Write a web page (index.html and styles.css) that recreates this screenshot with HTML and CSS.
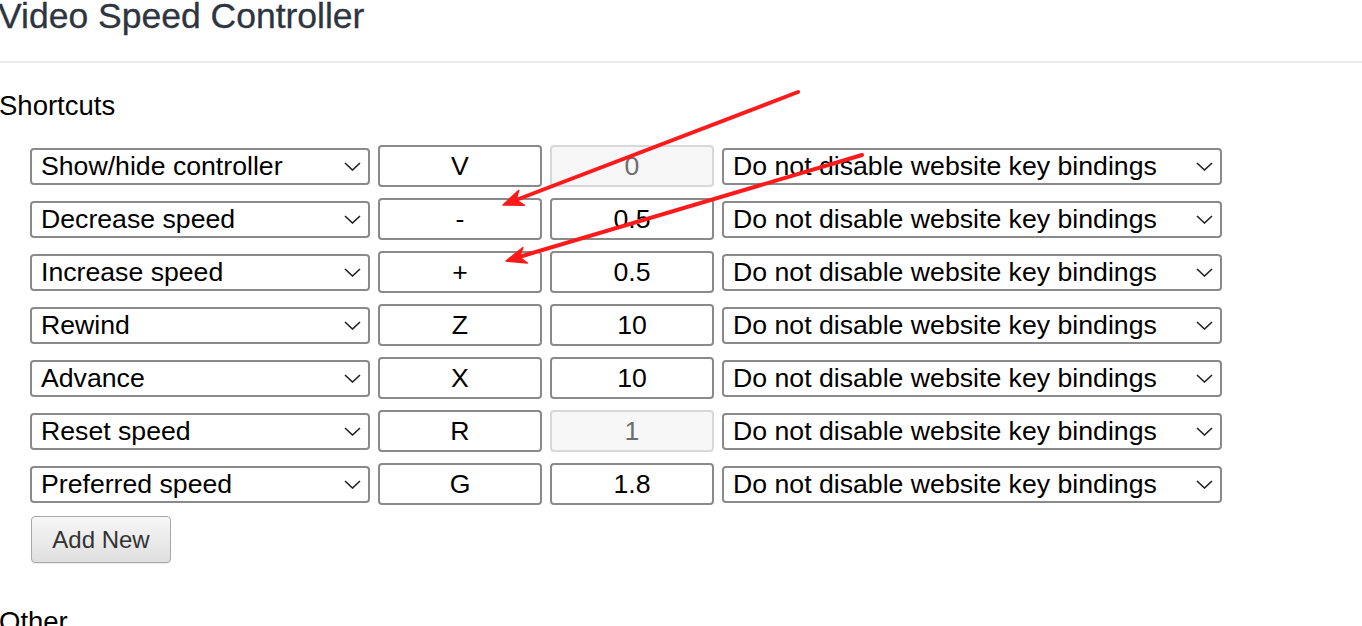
FILE: index.html
```html
<!DOCTYPE html>
<html lang="en">
<head>
    <meta charset="UTF-8">
    <meta name="viewport" content="width=device-width, initial-scale=1.0">
    <title>Video Speed Controller: Options</title>
    <link rel="stylesheet" href="styles.css">
</head>
<body>

    <div class="page">
        <h1>Video Speed Controller</h1>

        <h2>Shortcuts</h2>
        <div class="shortcuts">
            <div class="row">
                <select class="action"><option>Show/hide controller</option></select>
                <input class="key" type="text" value="V">
                <input class="amount" type="text" value="0" disabled>
                <select class="blacklist"><option>Do not disable website key bindings</option></select>
            </div>
            <div class="row">
                <select class="action"><option>Decrease speed</option></select>
                <input class="key" type="text" value="-">
                <input class="amount" type="text" value="0.5">
                <select class="blacklist"><option>Do not disable website key bindings</option></select>
            </div>
            <div class="row">
                <select class="action"><option>Increase speed</option></select>
                <input class="key" type="text" value="+">
                <input class="amount" type="text" value="0.5">
                <select class="blacklist"><option>Do not disable website key bindings</option></select>
            </div>
            <div class="row">
                <select class="action"><option>Rewind</option></select>
                <input class="key" type="text" value="Z">
                <input class="amount" type="text" value="10">
                <select class="blacklist"><option>Do not disable website key bindings</option></select>
            </div>
            <div class="row">
                <select class="action"><option>Advance</option></select>
                <input class="key" type="text" value="X">
                <input class="amount" type="text" value="10">
                <select class="blacklist"><option>Do not disable website key bindings</option></select>
            </div>
            <div class="row">
                <select class="action"><option>Reset speed</option></select>
                <input class="key" type="text" value="R">
                <input class="amount" type="text" value="1" disabled>
                <select class="blacklist"><option>Do not disable website key bindings</option></select>
            </div>
            <div class="row">
                <select class="action"><option>Preferred speed</option></select>
                <input class="key" type="text" value="G">
                <input class="amount" type="text" value="1.8">
                <select class="blacklist"><option>Do not disable website key bindings</option></select>
            </div>
            <button class="add">Add New</button>
        </div>

        <h2 class="other">Other</h2>
    </div>

    <!-- annotation arrows drawn over the screenshot -->
    <svg class="marks" width="1362" height="626" viewBox="0 0 1362 626">
        <line x1="798" y1="92" x2="516" y2="200" />
        <polygon points="503,205 524.5,205.3 516,200 518.8,190.4" />
        <line x1="862" y1="155" x2="519" y2="257" />
        <polygon points="506,261 527.4,263 519.4,257 522.9,247.6" />
    </svg>

</body>
</html>
```

FILE: styles.css
```css
body {
    font-family: "Liberation Sans", Arial, sans-serif;
    background-color: #fff;
    color: #000;
    margin: 0;
    padding: 0;
    overflow: hidden;
}

.page {
    position: relative;
}

h1 {
    font-size: 35.5px;
    font-weight: normal;
    line-height: 35px;
    color: #2d3540;
    margin: -1px 0 0 -2px;
    padding-bottom: 27px;
    border-bottom: 2px solid #ececec;
    -webkit-text-stroke: 0.3px #2d3540;
}

h2 {
    font-size: 27.5px;
    font-weight: normal;
    line-height: 30px;
    margin: 28px 0 24px -1px;
}

h2.other {
    margin-top: 44px;
}

.shortcuts {
    margin-left: 30px;
    display: flex;
    flex-direction: column;
    align-items: flex-start;
    gap: 11px;
}

.row {
    display: flex;
    align-items: center;
    gap: 8px;
    height: 42px;
}

select,
input {
    font-family: "Liberation Sans", Arial, sans-serif;
    font-size: 26.67px;
    color: #000;
    box-sizing: border-box;
    border: 2px solid #8a8a8a;
    border-radius: 4px;
    background-color: #fff;
    outline: none;
    margin: 0;
}

select {
    appearance: none;
    -webkit-appearance: none;
    height: 37px;
    padding: 0 34px 0 9px;
    background-image: url("data:image/svg+xml,%3Csvg xmlns='http://www.w3.org/2000/svg' width='17' height='9' viewBox='0 0 17 9'%3E%3Cpath d='M1 1 L8.5 8 L16 1' fill='none' stroke='%23222' stroke-width='1.6'/%3E%3C/svg%3E");
    background-repeat: no-repeat;
    background-position: right 7px center;
    background-size: 17px 9px;
}

select.action {
    width: 340px;
}

select.blacklist {
    width: 500px;
}

input {
    width: 164px;
    height: 42px;
    padding: 0 4px;
    text-align: center;
}

input:disabled {
    background-color: #f7f7f7;
    border-color: #d8d8d8;
    color: #6e6e6e;
}

.add {
    width: 140px;
    height: 47px;
    margin-left: 1px;
    font-family: "Liberation Sans", Arial, sans-serif;
    font-size: 24px;
    color: #333;
    background: linear-gradient(#f7f7f7, #dfdfdf);
    border: 1px solid #a8a8a8;
    border-radius: 4px;
    box-shadow: 0 1px 1px rgba(0, 0, 0, 0.08);
    padding: 0;
    cursor: pointer;
}

.marks {
    position: absolute;
    top: 0;
    left: 0;
    pointer-events: none;
}

.marks line {
    stroke: #fe1a1a;
    stroke-width: 4;
    stroke-linecap: round;
}

.marks polygon {
    fill: #fe1a1a;
    stroke: #fe1a1a;
    stroke-width: 1.5;
    stroke-linejoin: round;
}
```
